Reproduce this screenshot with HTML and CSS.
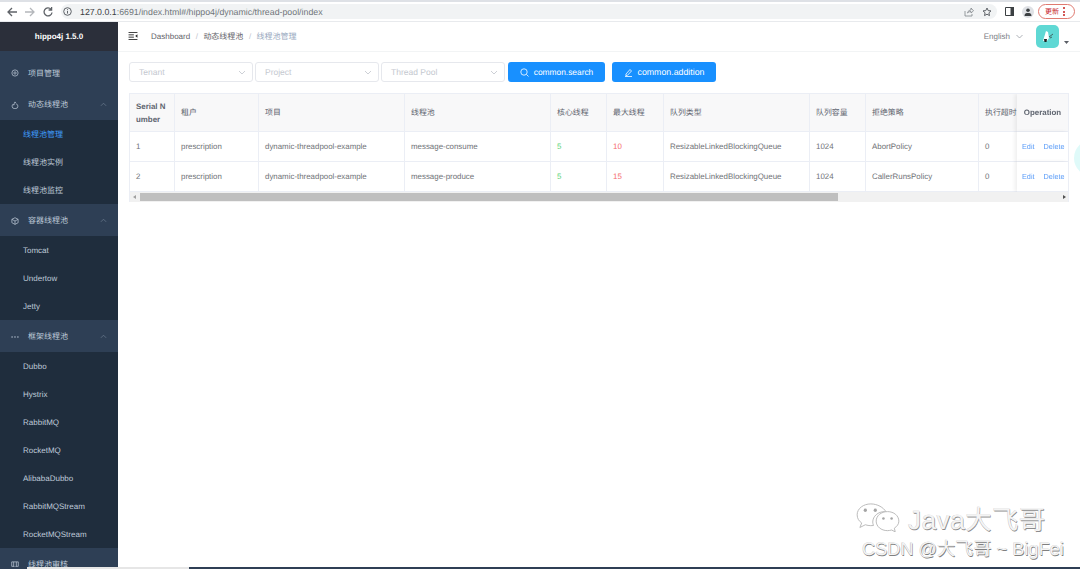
FILE: index.html
```html
<!DOCTYPE html>
<html lang="zh">
<head>
<meta charset="utf-8">
<title>hippo4j</title>
<link rel="stylesheet" href="styles.css">
</head>
<body>
<div class="page">
  <header class="chrome">
    <svg class="nav" width="12" height="12" viewBox="0 0 12 12"><path d="M11 6H2M6 2 2 6l4 4" fill="none" stroke="#5f6368" stroke-width="1.3"/></svg>
    <svg class="nav" width="12" height="12" viewBox="0 0 12 12"><path d="M1 6h9M6 2l4 4-4 4" fill="none" stroke="#b4b7bb" stroke-width="1.3"/></svg>
    <svg class="nav" width="12" height="12" viewBox="0 0 12 12"><path d="M10 6.500A4 4 0 1 1 9 3.200M9.600 1v3H6.600" fill="none" stroke="#5f6368" stroke-width="1.3"/></svg>
    <div class="omnibox">
      <svg width="9" height="9" viewBox="0 0 9 9"><circle cx="4.500" cy="4.500" r="3.800" fill="none" stroke="#5f6368"/><path d="M4.500 4v2.600M4.500 2.200v1" stroke="#5f6368"/></svg>
      <span class="url"><b>127.0.0.1</b>:6691/index.html#/hippo4j/dynamic/thread-pool/index</span>
      <span class="omni-end">
        <svg width="10" height="10" viewBox="0 0 10 10"><path d="M1 4v5h7V7M3.500 6C4 3.500 6 3 7 3V1l2.500 2.800L7 6V4.500C5.500 4.500 4.500 5 3.500 6Z" fill="none" stroke="#80858a" stroke-width=".8"/></svg>
        <svg width="10" height="10" viewBox="0 0 10 10"><path d="m5 1 1.200 2.600 2.800.3-2.100 1.900.6 2.800L5 7.200 2.500 8.600l.6-2.800L1 3.900l2.800-.3Z" fill="none" stroke="#5f6368"/></svg>
      </span>
    </div>
    <svg class="sidepanel" width="9" height="9" viewBox="0 0 9 9"><path d="M.5.500h8v8h-8Z" fill="#fff" stroke="#3c4043"/><path d="M5.500 0H9v9H5.500Z" fill="#3c4043"/></svg>
    <span class="profile"><svg width="8" height="8" viewBox="0 0 8 8"><circle cx="4" cy="2.300" r="1.800" fill="#3c4043"/><path d="M.5 8c0-2.500 1.500-3 3.500-3s3.500.5 3.500 3Z" fill="#3c4043"/></svg></span>
    <span class="update">更新<i class="dots"><s></s><s></s><s></s></i></span>
  </header>

  <div class="app">
    <aside class="sidebar">
      <div class="logo">hippo4j 1.5.0</div>
      <nav class="menu">
        <div class="parent first"><svg class="mi" width="8" height="8" viewBox="0 0 9 9"><circle cx="4.500" cy="4.500" r="3.500"/><circle cx="4.500" cy="4.500" r="1.300"/></svg>项目管理</div>
        <div class="parent"><svg class="mi" width="8" height="8" viewBox="0 0 9 9"><path d="M4.500 1C5 3 7.800 3.800 7.800 5.800a3.300 2.900 0 0 1-6.600 0C1.200 4.800 1.800 4 2.400 3.600c.2.700.5 1 .9 1.100C3.500 3.300 3.800 2 4.500 1Z"/></svg>动态线程池<svg class="chev" width="7" height="5" viewBox="0 0 8 5"><path d="M1 4 4 1l3 3"/></svg></div>
        <div class="child active">线程池管理</div>
        <div class="child">线程池实例</div>
        <div class="child">线程池监控</div>
        <div class="parent"><svg class="mi" width="8" height="8" viewBox="0 0 9 9"><path d="M4.500.8 8 2.600v3.800L4.500 8.300 1 6.400V2.600ZM1 2.600l3.500 1.900L8 2.600M4.500 4.500v3.800"/></svg>容器线程池<svg class="chev" width="7" height="5" viewBox="0 0 8 5"><path d="M1 4 4 1l3 3"/></svg></div>
        <div class="child">Tomcat</div>
        <div class="child">Undertow</div>
        <div class="child">Jetty</div>
        <div class="parent"><svg class="mi dotsicon" width="8" height="8" viewBox="0 0 9 9"><circle cx="1.200" cy="4.500" r=".8"/><circle cx="4.500" cy="4.500" r=".8"/><circle cx="7.800" cy="4.500" r=".8"/></svg>框架线程池<svg class="chev" width="7" height="5" viewBox="0 0 8 5"><path d="M1 4 4 1l3 3"/></svg></div>
        <div class="child">Dubbo</div>
        <div class="child">Hystrix</div>
        <div class="child">RabbitMQ</div>
        <div class="child">RocketMQ</div>
        <div class="child">AlibabaDubbo</div>
        <div class="child">RabbitMQStream</div>
        <div class="child">RocketMQStream</div>
        <div class="parent"><svg class="mi" width="8" height="8" viewBox="0 0 9 9"><path d="M.8 1h7.400v5H5.500L4.500 8 3.500 6H.8ZM3 1v5M6 1v5"/></svg>线程池审核</div>
      </nav>
    </aside>

    <main class="main">
      <div class="navbar">
        <svg class="hamburger" width="10" height="8" viewBox="0 0 10 9"><path d="M0 .5h10M0 8.500h10M0 3.200h6M0 5.800h6" stroke="#222" fill="none"/><path d="M10 2.500v4L7.500 4.500Z" fill="#222"/></svg>
        <div class="crumbs"><span>Dashboard</span><em>/</em><span>动态线程池</span><em>/</em><span class="last">线程池管理</span></div>
        <div class="nav-right">
          <span class="lang">English</span>
          <svg class="lang-chev" width="7" height="5" viewBox="0 0 7 5"><path d="m.5 1 3 3 3-3" fill="none" stroke="#9a9ea6" stroke-width=".8"/></svg>
          <span class="avatar"><svg width="14" height="16" viewBox="0 0 14 16"><path d="M5 2 7 3 8 9 6 12 2 12Z" fill="#fff"/><path d="M3 10h3l-.5 3h-2Z" fill="#222"/><path d="m8 8 4-3M9 9l2-1" stroke="#333" stroke-width=".7"/></svg></span>
          <svg class="caret" width="5" height="4" viewBox="0 0 5 4"><path d="M0 0h5L2.500 3Z" fill="#5a5e66"/></svg>
        </div>
      </div>

      <section class="content">
        <div class="filters">
          <div class="select"><span>Tenant</span><svg width="8" height="5" viewBox="0 0 8 5"><path d="m1 1 3 3 3-3"/></svg></div>
          <div class="select"><span>Project</span><svg width="8" height="5" viewBox="0 0 8 5"><path d="m1 1 3 3 3-3"/></svg></div>
          <div class="select"><span>Thread Pool</span><svg width="8" height="5" viewBox="0 0 8 5"><path d="m1 1 3 3 3-3"/></svg></div>
          <button class="btn b-search"><svg width="9" height="9" viewBox="0 0 9 9"><circle cx="4" cy="4" r="3.200"/><path d="m6.500 6.500 2 2"/></svg>common.search</button>
          <button class="btn b-add"><svg width="9" height="9" viewBox="0 0 9 9"><path d="M2 6 6 1.500 7.500 3 3.500 7.300 1.800 7.600ZM1 8.500h7"/></svg>common.addition</button>
        </div>

        <div class="table-wrap">
          <div class="table-scroll">
            <table class="grid">
              <colgroup>
                <col class="c1"><col class="c2"><col class="c3"><col class="c3"><col class="c5"><col class="c6"><col class="c3"><col class="c5"><col class="c9"><col class="c10"><col class="c11">
              </colgroup>
              <thead>
                <tr><th class="wrap">Serial Number</th><th>租户</th><th>项目</th><th>线程池</th><th>核心线程</th><th>最大线程</th><th>队列类型</th><th>队列容量</th><th>拒绝策略</th><th>执行超时</th><th class="fixed">Operation</th></tr>
              </thead>
              <tbody>
                <tr><td>1</td><td>prescription</td><td>dynamic-threadpool-example</td><td>message-consume</td><td class="green">5</td><td class="red">10</td><td>ResizableLinkedBlockingQueue</td><td>1024</td><td>AbortPolicy</td><td>0</td><td class="fixed ops"><a>Edit</a><a>Delete</a></td></tr>
                <tr><td>2</td><td>prescription</td><td>dynamic-threadpool-example</td><td>message-produce</td><td class="green">5</td><td class="red">15</td><td>ResizableLinkedBlockingQueue</td><td>1024</td><td>CallerRunsPolicy</td><td>0</td><td class="fixed ops"><a>Edit</a><a>Delete</a></td></tr>
              </tbody>
            </table>
          </div>
          <div class="hbar"><i class="arrow left"></i><div class="thumb"></div><i class="arrow right"></i></div>
        </div>
      </section>
    </main>
  </div>

  <div class="bottom-line"></div>
  <div class="blob"></div>
  <div class="watermark">
    <div class="wm-top">
      <svg width="44" height="29" viewBox="0 0 48 32"><g fill="#fff" stroke="#b5b5b5" stroke-width="1"><path d="M16 1C8 1 1 6 1 13c0 4 2 7 5 9l-2 5 6-3c2 .6 4 1 6 1 1 0 2 0 3-.2-.5-1.300-.8-2.600-.8-3.800 0-6.500 6-11.500 13-11.500h1.500C30 5 23.500 1 16 1Z"/><path d="M47 20c0-6-5.500-10.500-12.500-10.500S22 14 22 20s5.500 10.500 12.500 10.500c1.500 0 3-.3 4.500-.7l4 2-1-4c3-2 5-4.500 5-7.800Z"/></g><g fill="#a5a5a5"><circle cx="10" cy="8" r="1.800"/><circle cx="21" cy="8" r="1.800"/><circle cx="30" cy="17" r="1.400"/><circle cx="39" cy="17" r="1.400"/></g></svg>
      <span>Java大飞哥</span>
    </div>
    <div class="wm-bottom">CSDN @大飞哥 ~ BigFei</div>
  </div>
</div>
</body>
</html>
```
FILE: styles.css
```css
* { box-sizing: border-box; }
html, body { margin: 0; padding: 0; height: 100%; overflow: hidden; background: #fff; }
body { font-family: "Liberation Sans", "Noto Sans CJK SC", sans-serif; font-size: 8px; color: #6a6d73; text-rendering: geometricPrecision; }
.page { position: relative; width: 1080px; height: 569px; overflow: hidden; display: flex; flex-direction: column; }

/* browser chrome */
.chrome { height: 22px; flex: none; display: flex; align-items: center; background: #fff; border-top: 2px solid #dee1e6; border-bottom: 1px solid #e8eaed; padding: 0 0 0 6px; }
.nav { margin-right: 3px; width: 12px; flex: none; }
.nav + .nav { margin-left: 3px; }
.omnibox { margin-left: 4px; width: 936px; flex: none; height: 15px; border-radius: 8px; background: #f1f3f4; display: flex; align-items: center; padding: 0 5px 0 2px; }
.url { margin-left: 8px; font-size: 8.800px; color: #70757a; white-space: nowrap; }
.url b { font-weight: 400; color: #3c4043; }
.omni-end { margin-left: auto; display: flex; gap: 8px; }
.sidepanel { margin-left: 8px; flex: none; }
.profile { margin-left: 8px; width: 12px; height: 12px; border-radius: 50%; background: #dfe1e5; display: flex; align-items: center; justify-content: center; flex: none; }
.update { margin-left: 4px; width: 37px; height: 15px; flex: none; border: 1px solid #e07a70; border-radius: 8px; color: #c5221f; font-size: 7px; font-family: "Noto Sans CJK SC", sans-serif; display: flex; align-items: center; padding-left: 6px; background: #fff; }
.dots { margin-left: 4px; display: flex; flex-direction: column; gap: 1.500px; }
.dots s { display: block; width: 2px; height: 2px; border-radius: 50%; background: #c5221f; }

/* application */
.app { flex: 1; display: flex; min-height: 0; }
.sidebar { width: 118px; flex: none; background: #1f2d3d; overflow: hidden; }
.logo { height: 29px; background: #2b2f3a; color: #fff; font-weight: 700; font-size: 8px; text-align: center; line-height: 29px; }
.parent { height: 32px; display: flex; align-items: center; padding: 1px 0 0 11px; background: #2e3f55; color: #bfcbd9; font-size: 8px; }
.parent.first { height: 37px; padding-top: 7px; }
.mi { margin-right: 9px; flex: none; fill: none; stroke: #bfcbd9; stroke-width: .8; }
.dotsicon { fill: #bfcbd9; stroke: none; }
.chev { margin-left: auto; margin-right: 11px; fill: none; stroke: #6f7f92; stroke-width: .8; }
.child { height: 28px; display: flex; align-items: center; padding-left: 23px; color: #bfcbd9; font-size: 8px; }
.child.active { color: #409eff; }

.main { flex: 1; min-width: 0; display: flex; flex-direction: column; }
.navbar { height: 30px; flex: none; display: flex; align-items: center; border-bottom: 1px solid #f2f4f5; padding-left: 10px; }
.hamburger { flex: none; margin-top: -1px; }
.crumbs { margin-left: 13px; display: flex; align-items: center; font-size: 8px; color: #5f6268; }
.crumbs em { font-style: normal; color: #c0c4cc; margin: 0 5.500px; }
.crumbs .last { color: #97a8be; }
.nav-right { margin-left: auto; display: flex; align-items: center; padding-right: 11px; }
.lang { font-size: 8px; color: #7a7d84; }
.lang-chev { margin-left: 6px; }
.avatar { margin-left: 13px; width: 23px; height: 23px; border-radius: 5px; background: #5fd8d4; display: flex; align-items: center; justify-content: center; }
.caret { margin-left: 5px; align-self: flex-end; margin-bottom: 3px; }

.content { padding: 10px 11px 0; }
.filters { display: flex; align-items: center; height: 20px; gap: 2px; }
.select { width: 124px; height: 20px; border: 1px solid #e6e8ed; border-radius: 3px; display: flex; align-items: center; justify-content: space-between; padding: 0 6px 0 9px; background: #fff; }
.select span { font-size: 8.500px; color: #c4c8cf; }
.select svg { fill: none; stroke: #c0c4cc; stroke-width: .8; }
.btn { height: 20px; border: 0; border-radius: 3px; background: #1890ff; color: #fff; font-family: "Liberation Sans", sans-serif; display: flex; align-items: center; justify-content: center; gap: 5px; padding: 0; text-rendering: geometricPrecision; }
.btn svg { fill: none; stroke: #fff; stroke-width: .8; flex: none; }
.b-search { width: 97px; margin-left: 1px; font-size: 8.400px; }
.b-add { width: 104px; margin-left: 5px; font-size: 8.800px; }

.table-wrap { width: 940px; margin-top: 11px; border: 1px solid #ebeef5; border-bottom: 0; }
.table-scroll { overflow: hidden; width: 100%; }
.grid { border-collapse: separate; border-spacing: 0; table-layout: fixed; width: 1001px; }
.c1 { width: 45px; }
.c2 { width: 84px; }
.c3 { width: 146px; }
.c5 { width: 56px; }
.c6 { width: 57px; }
.c9 { width: 113px; }
.c10 { width: 101px; }
.c11 { width: 51px; }
.grid th, .grid td { border-right: 1px solid #ebeef5; border-bottom: 1px solid #ebeef5; padding: 0 6px; text-align: left; font-size: 7.900px; white-space: nowrap; overflow: hidden; }
.grid th { height: 38px; background: #f8f8f9; color: #5f6570; font-weight: 400; }
.grid th.wrap { white-space: normal; word-break: break-all; font-weight: 700; line-height: 13px; }
.grid td { height: 30px; background: #fff; color: #6f7277; }
.grid .green { color: #5ed47a; }
.grid .red { color: #f56c6c; }
.grid .fixed { position: sticky; right: 0; box-shadow: -2px 0 4px rgba(0, 0, 0, .07); border-right: 0; }
.grid th.fixed { font-weight: 700; text-align: center; padding: 0; }
.grid .ops { padding: 0 0 0 5px; }
.ops a { color: #5a9cf8; font-size: 7.300px; }
.ops a + a { margin-left: 9px; }

.hbar { height: 10px; background: #f1f1f1; display: flex; align-items: center; }
.thumb { width: 698px; height: 8px; margin-left: 4px; background: #bfbfbf; }
.arrow { display: block; width: 0; height: 0; border-top: 2px solid transparent; border-bottom: 2px solid transparent; }
.arrow.left { margin-left: 3px; border-right: 3px solid #a0a0a0; }
.arrow.right { margin-left: auto; margin-right: 2px; border-left: 3px solid #505050; }

.bottom-line { position: absolute; left: 0; right: 0; bottom: 0; height: 2px; background: #2f3f55; }
.bottom-line::before { content: ""; display: block; margin-left: 27px; width: 162px; height: 2px; background: #e6e6e6; }
.blob { position: absolute; left: 1074px; top: 140px; width: 36px; height: 36px; border-radius: 50%; background: #dffaf9; }
.watermark { position: absolute; left: 856px; top: 503px; }
.wm-top { display: flex; align-items: flex-start; height: 34px; }
.wm-top span { margin: 1px 0 0 8px; font-size: 26.500px; line-height: 32px; letter-spacing: .3px; color: #f4f4f4; text-shadow: .6px .6px 0 #8c8c8c, -.3px -.3px 0 #c8c8c8; }
.wm-bottom { margin-top: 1px; margin-left: 6px; font-size: 18.200px; line-height: 22px; white-space: nowrap; color: #f4f4f4; text-shadow: .6px .6px 0 #808080, -.3px -.3px 0 #c0c0c0; }
```
